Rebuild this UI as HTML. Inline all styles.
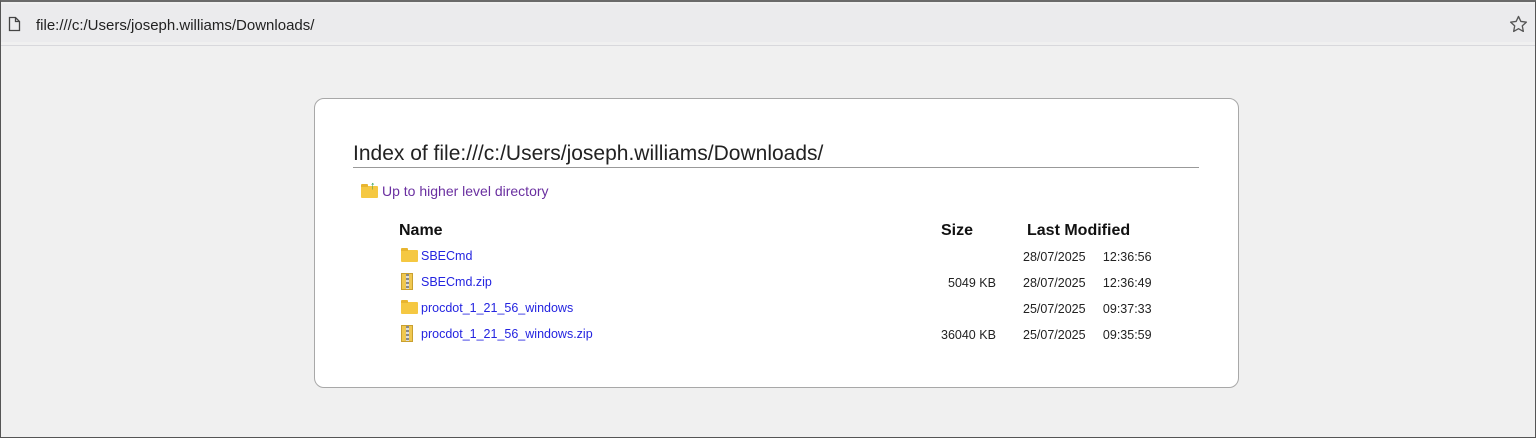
<!DOCTYPE html>
<html><head><meta charset="utf-8"><style>
*{margin:0;padding:0;box-sizing:border-box}
body{width:1536px;height:438px;background:#f0f0f0;font-family:"Liberation Sans",sans-serif;position:relative;overflow:hidden}
.frame{position:absolute;left:0;top:0;width:1536px;height:438px;border:1px solid #555;border-top:2px solid #6a6a6a;pointer-events:none}
.bar{position:absolute;left:0;top:4px;width:1536px;height:38px;background:#ebebed}
.line{position:absolute;left:0;top:45px;width:1536px;height:1px;background:#d8d8dc}
.url{position:absolute;left:36px;top:17px;font-size:15px;color:#222}
.card{position:absolute;left:314px;top:98px;width:925px;height:290px;background:#fff;border:1px solid #a8a8a8;border-radius:10px}
.a{position:absolute;white-space:nowrap}
h1{position:absolute;left:353px;top:142px;font-size:21px;font-weight:normal;color:#222;width:846px;border-bottom:1px solid #999;padding-bottom:1px}
.up{color:#6a2fa0;font-size:14px}
.lnk{color:#2424e0;font-size:12.5px}
.th{font-weight:bold;font-size:16px;color:#111}
.td{font-size:12.5px;color:#222}
.fold{position:absolute;width:17px;height:12px;background:#f5c842;border-radius:1px}
.fold:before{content:"";position:absolute;left:0;top:-2px;width:7px;height:3px;background:#e8b530;border-radius:1px 1px 0 0}
.zip{position:absolute;width:12px;height:17px;background:#f0c850;border:1px solid #c9a030}
.zip:after{content:"";position:absolute;left:4px;top:0;width:3px;height:15px;background:repeating-linear-gradient(#888 0 2px,#ddd 2px 4px)}
</style></head><body>
<div class="bar"></div><div class="line"></div>
<svg style="position:absolute;left:8px;top:16px" width="13" height="16" viewBox="0 0 13 16"><path d="M1.5 1.5h6l4 4v9h-10z M7.5 1.5v4h4" fill="none" stroke="#444" stroke-width="1.3"/></svg>
<div class="url">file:///c:/Users/joseph.williams/Downloads/</div>
<svg style="position:absolute;left:1509px;top:15px" width="19" height="18" viewBox="0 0 20 19"><path d="M10 1.5l2.5 5.3 5.8.7-4.3 4 1.1 5.8L10 14.4l-5.1 2.9L6 11.5 1.7 7.5l5.8-.7z" fill="none" stroke="#555" stroke-width="1.4" stroke-linejoin="round"/></svg>
<div class="card"></div>
<h1>Index of file:///c:/Users/joseph.williams/Downloads/</h1>
<div class="fold" style="left:361px;top:186px"></div>
<div class="a" style="left:370px;top:180px;color:#2a9a4a;font-size:11px">&#8593;</div>
<div class="a up" style="left:382px;top:183px">Up to higher level directory</div>
<div class="a th" style="left:399px;top:222px">Name</div>
<div class="a th" style="left:941px;top:222px">Size</div>
<div class="a th" style="left:1027px;top:222px">Last Modified</div>
<div class="fold" style="left:401px;top:250px"></div>
<div class="a lnk" style="left:421px;top:249px">SBECmd</div>
<div class="a td" style="left:1023px;top:250px">28/07/2025&nbsp;&nbsp;&nbsp;&nbsp;&nbsp;12:36:56</div>
<div class="zip" style="left:401px;top:273px"></div>
<div class="a lnk" style="left:421px;top:275px">SBECmd.zip</div>
<div class="a td" style="left:948px;top:276px">5049 KB</div>
<div class="a td" style="left:1023px;top:276px">28/07/2025&nbsp;&nbsp;&nbsp;&nbsp;&nbsp;12:36:49</div>
<div class="fold" style="left:401px;top:302px"></div>
<div class="a lnk" style="left:421px;top:301px">procdot_1_21_56_windows</div>
<div class="a td" style="left:1023px;top:302px">25/07/2025&nbsp;&nbsp;&nbsp;&nbsp;&nbsp;09:37:33</div>
<div class="zip" style="left:401px;top:325px"></div>
<div class="a lnk" style="left:421px;top:327px">procdot_1_21_56_windows.zip</div>
<div class="a td" style="left:941px;top:328px">36040 KB</div>
<div class="a td" style="left:1023px;top:328px">25/07/2025&nbsp;&nbsp;&nbsp;&nbsp;&nbsp;09:35:59</div>
<div class="frame"></div>
</body></html>
